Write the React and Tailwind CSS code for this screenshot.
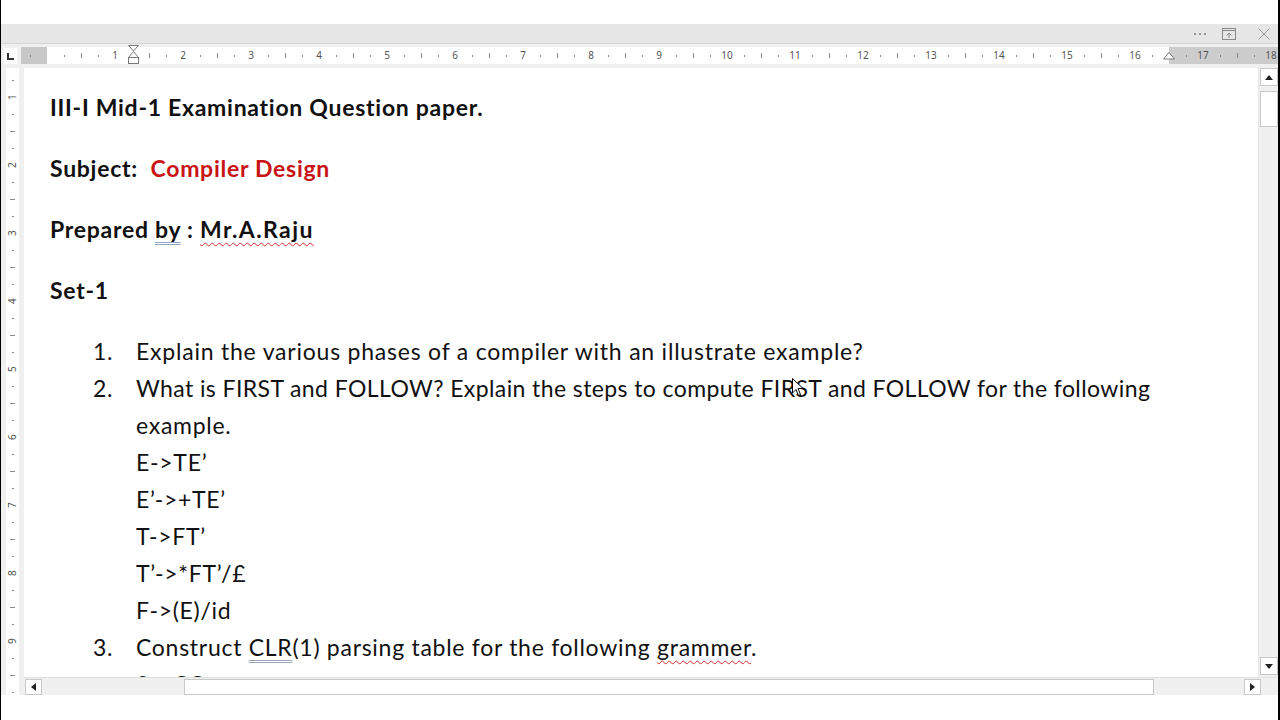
import React from "react";

function HRuler() {
  const ticks = [];
  for (let q = -1; q <= 72; q++) {
    const x = 26 + 17 * q;
    if (q % 4 === 0) {
      if (q === 0) continue;
      ticks.push(
        <text key={"n" + q} x={x} y={15} textAnchor="middle" fontSize="10" fill="#555" fontFamily="'Noto Sans', sans-serif">
          {q / 4}
        </text>
      );
    } else if (Math.abs(q % 4) === 2) {
      ticks.push(<rect key={"l" + q} x={x} y={9} width={1} height={5} fill="#8a8a8a" />);
    } else {
      ticks.push(<rect key={"d" + q} x={x} y={11} width={1} height={2} fill="#8a8a8a" />);
    }
  }
  return (
    <svg width="1257" height="24" className="block">
      <rect x="0" y="3" width="26" height="17" fill="#c8c8c8" />
      <rect x="26" y="3" width="1122" height="17" fill="#ffffff" />
      <rect x="1148" y="3" width="109" height="17" fill="#cccccc" />
      {ticks}
      <path d="M107.5 1.5 L117.5 1.5 L112.5 7 Z" fill="#fff" stroke="#7a7a7a" />
      <path d="M112.5 7.5 L117.5 13.5 L107.5 13.5 Z" fill="#fff" stroke="#7a7a7a" />
      <rect x="107.5" y="13.5" width="10" height="6" fill="#fff" stroke="#7a7a7a" />
      <path d="M1148 8.5 L1153.5 15 L1142.5 15 Z" fill="#fff" stroke="#7a7a7a" />
    </svg>
  );
}

function VRuler() {
  const items = [];
  for (let q = 3; q <= 40; q++) {
    const y = -39 + 17 * q;
    if (y > 625) break;
    if (q % 4 === 0) {
      items.push(
        <text key={"n" + q} x={11} y={y} textAnchor="middle" dominantBaseline="central" fontSize="10" fill="#555" fontFamily="'Noto Sans', sans-serif" transform={`rotate(-90 11 ${y})`}>
          {q / 4}
        </text>
      );
    } else if (q % 4 === 2) {
      items.push(<rect key={"l" + q} x={9} y={y} width={5} height={1} fill="#8a8a8a" />);
    } else {
      items.push(<rect key={"d" + q} x={11} y={y} width={2} height={1} fill="#8a8a8a" />);
    }
  }
  return (
    <svg width="23" height="627" className="block">
      <rect x="0" y="0" width="23" height="627" fill="#f0f0f0" />
      <rect x="5" y="0" width="13" height="627" fill="#ffffff" />
      {items}
    </svg>
  );
}

function Btn({ children, className = "" }) {
  return (
    <div className={"bg-white border border-[#c8c8c8] flex items-center justify-center " + className}>
      {children}
    </div>
  );
}

export default function App() {
  return (
    <div className="w-[1280px] h-[720px] overflow-hidden bg-white flex flex-col border-l border-r-2 border-black font-['Lato',sans-serif] relative">
      <div className="h-[24px] bg-white shrink-0" />
      <div className="h-[20px] bg-[#e6e6e6] border-b border-[#d4d4d4] shrink-0 flex items-center justify-end pr-[8px] gap-[14px]">
        <div className="flex gap-[3px] items-center">
          <span className="w-[2px] h-[2px] bg-[#7a7a7a] rounded-full" />
          <span className="w-[2px] h-[2px] bg-[#7a7a7a] rounded-full" />
          <span className="w-[2px] h-[2px] bg-[#7a7a7a] rounded-full" />
        </div>
        <svg width="14" height="12" viewBox="0 0 14 12" className="ml-[2px]">
          <rect x="0.5" y="0.5" width="13" height="11" fill="none" stroke="#8a8a8a" />
          <line x1="0.5" y1="2.5" x2="13.5" y2="2.5" stroke="#8a8a8a" />
          <path d="M7 10 L7 5 M4.5 7.5 L7 5 L9.5 7.5" fill="none" stroke="#8a8a8a" />
        </svg>
        <svg width="12" height="12" viewBox="0 0 12 12" className="ml-[8px]">
          <path d="M0.5 0.5 L11.5 11.5 M11.5 0.5 L0.5 11.5" stroke="#9a9a9a" strokeWidth="1" />
        </svg>
      </div>
      <div className="h-[24px] bg-[#f0f0f0] shrink-0 flex">
        <div className="w-[22px] flex items-center justify-center">
          <div className="w-[13px] h-[16px] bg-white flex items-center justify-center">
            <svg width="7" height="7" viewBox="0 0 7 7">
              <path d="M1 0 L1 6 L7 6" fill="none" stroke="#333" strokeWidth="2" />
            </svg>
          </div>
        </div>
        <div className="pl-[1px]">
          <HRuler />
        </div>
      </div>
      <div className="flex h-[627px] shrink-0">
        <div className="w-[23px] shrink-0">
          <VRuler />
        </div>
        <div className="flex-1 flex flex-col">
          <div className="flex h-[609px]">
            <div className="flex-1 overflow-hidden bg-white pt-[21px] pl-[26px] text-[23px] leading-[37px] tracking-[0.72px] text-[#111] relative">
              <p className="font-bold mb-[24px] whitespace-nowrap">III-I Mid-1 Examination Question paper.</p>
              <p className="font-bold mb-[24px] whitespace-nowrap">
                Subject:&nbsp; <span className="text-[#c81414]">Compiler Design</span>
              </p>
              <p className="font-bold mb-[24px] whitespace-nowrap">
                Prepared <span className="underline decoration-double decoration-[#8fa6c4] decoration-[1px] underline-offset-[4px]">by</span> :{" "}
                <span className="underline decoration-wavy decoration-[#d03030] decoration-[1px] underline-offset-[4px] tracking-[1.4px]">Mr.A.Raju</span>
              </p>
              <p className="font-bold mb-[24px] whitespace-nowrap">Set-1</p>
              <div className="pl-[43px] whitespace-nowrap">
                <div className="flex">
                  <span className="w-[43px] shrink-0">1.</span>
                  <span className="tracking-[0.78px]">Explain the various phases of a compiler with an illustrate example?</span>
                </div>
                <div className="flex">
                  <span className="w-[43px] shrink-0">2.</span>
                  <div>
                    <div className="tracking-[0.4px]">What is FIRST and FOLLOW? Explain the steps to compute FIRST and FOLLOW for the following</div>
                    <div>example.</div>
                    <div>E-&gt;TE’</div>
                    <div>E’-&gt;+TE’</div>
                    <div>T-&gt;FT’</div>
                    <div>T’-&gt;*FT’/£</div>
                    <div>F-&gt;(E)/id</div>
                  </div>
                </div>
                <div className="flex">
                  <span className="w-[43px] shrink-0">3.</span>
                  <span>
                    Construct{" "}
                    <span className="underline decoration-double decoration-[#9aa6b8] decoration-[1px] underline-offset-[4px]">CLR</span>(1) parsing table for the following{" "}
                    <span className="underline decoration-wavy decoration-[#d03030] decoration-[1px] underline-offset-[4px]">grammer</span>.
                  </span>
                </div>
                <div className="flex">
                  <span className="w-[43px] shrink-0"></span>
                  <span>S-&gt;CC</span>
                </div>
              </div>
              <svg width="12" height="19" viewBox="0 0 12 19" className="absolute left-[768px] top-[310px]">
                <path d="M0.5 0.5 L0.5 15 L4 11.5 L6.5 17.5 L8.5 16.5 L6 10.5 L11 10.5 Z" fill="#fff" stroke="#000" strokeWidth="1" />
              </svg>
            </div>
            <div className="w-[20px] bg-[#f0f0f0] flex flex-col items-center border-l border-[#e6e6e6]">
              <Btn className="w-[18px] h-[18px]">
                <svg width="8" height="5" viewBox="0 0 8 5"><path d="M0 5 L4 0 L8 5 Z" fill="#222" /></svg>
              </Btn>
              <div className="w-[18px] h-[36px] mt-[5px] bg-white border border-[#c8c8c8]" />
              <div className="flex-1" />
              <Btn className="w-[18px] h-[18px] mb-[2px]">
                <svg width="8" height="5" viewBox="0 0 8 5"><path d="M0 0 L8 0 L4 5 Z" fill="#222" /></svg>
              </Btn>
            </div>
          </div>
          <div className="h-[18px] bg-[#f0f0f0] flex items-center border-t border-[#e0e0e0]">
            <Btn className="w-[17px] h-[16px] ml-[1px]">
              <svg width="5" height="8" viewBox="0 0 5 8"><path d="M5 0 L5 8 L0 4 Z" fill="#222" /></svg>
            </Btn>
            <div className="w-[142px]" />
            <div className="w-[970px] h-[16px] bg-white border border-[#c8c8c8]" />
            <div className="flex-1" />
            <Btn className="w-[17px] h-[16px] mr-[17px]">
              <svg width="5" height="8" viewBox="0 0 5 8"><path d="M0 0 L5 4 L0 8 Z" fill="#222" /></svg>
            </Btn>
          </div>
        </div>
      </div>
      <div className="flex-1 bg-white" />
    </div>
  );
}
